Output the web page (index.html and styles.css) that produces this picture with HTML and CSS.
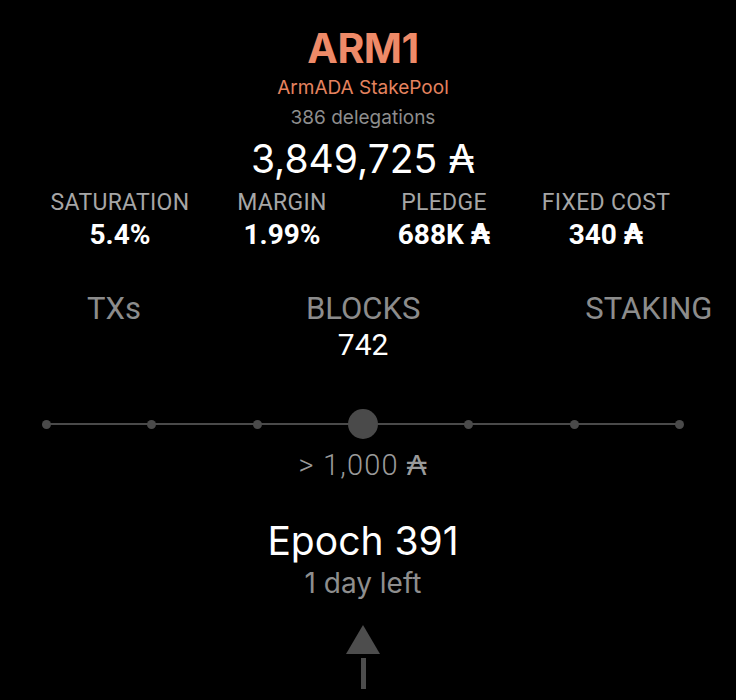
FILE: index.html
```html
<!DOCTYPE html>
<html lang="en">
<head>
    <meta charset="UTF-8">
    <title>ARM1 Pool</title>
    <link rel="stylesheet" href="styles.css">
</head>
<body>
    <div class="screen">
        <header class="pool">
            <h1 class="ticker">ARM1</h1>
            <div class="pool-name">ArmADA StakePool</div>
            <div class="delegations">386 delegations</div>
            <div class="stake">3,849,725 ₳</div>
        </header>

        <section class="stats">
            <div class="stat">
                <div class="stat-label">SATURATION</div>
                <div class="stat-value">5.4%</div>
            </div>
            <div class="stat">
                <div class="stat-label">MARGIN</div>
                <div class="stat-value">1.99%</div>
            </div>
            <div class="stat">
                <div class="stat-label">PLEDGE</div>
                <div class="stat-value">688K ₳</div>
            </div>
            <div class="stat">
                <div class="stat-label">FIXED COST</div>
                <div class="stat-value">340 ₳</div>
            </div>
        </section>

        <nav class="tabs">
            <div class="tab">TXs</div>
            <div class="tab active">
                BLOCKS
                <div class="tab-count">742</div>
            </div>
            <div class="tab">STAKING</div>
        </nav>

        <div class="slider">
            <span class="tick"><span class="dot"></span></span>
            <span class="tick"><span class="dot"></span></span>
            <span class="tick"><span class="dot"></span></span>
            <span class="tick"><span class="dot big"></span></span>
            <span class="tick"><span class="dot"></span></span>
            <span class="tick"><span class="dot"></span></span>
            <span class="tick"><span class="dot"></span></span>
        </div>
        <div class="slider-value">&gt; 1,000 ₳</div>

        <div class="epoch">
            <div class="epoch-title">Epoch 391</div>
            <div class="epoch-left">1 day left</div>
        </div>

        <svg class="arrow" width="34" height="64" viewBox="0 0 34 64">
            <polygon points="17,0 34,29 0,29" fill="#4d4d4d"/>
            <rect x="15" y="33" width="5" height="31" fill="#4d4d4d"/>
        </svg>
    </div>
</body>
</html>
```

FILE: styles.css
```css
body {
    margin: 0;
    background-color: #000;
    color: #fff;
    font-family: Inter, "DejaVu Sans", sans-serif;
}

.screen {
    width: 726px;
    display: flex;
    flex-direction: column;
    align-items: center;
    text-align: center;
}

.pool {
    padding-top: 23px;
}

.ticker {
    margin: 0;
    font-size: 41px;
    line-height: 50px;
    font-weight: 700;
    letter-spacing: -0.5px;
    color: #ee8a68;
}

.pool-name {
    font-size: 19px;
    line-height: 30px;
    color: #e5835f;
}

.delegations {
    font-size: 19px;
    line-height: 30px;
    color: #8e8e8e;
}

.stake {
    margin-top: 3px;
    font-size: 39px;
    line-height: 46px;
}

.stats {
    margin-top: 8px;
    width: 648px;
    display: grid;
    grid-template-columns: repeat(4, 1fr);
    font-family: Roboto, "DejaVu Sans", sans-serif;
}

.stat-label {
    font-size: 23px;
    line-height: 26px;
    letter-spacing: 0.3px;
    color: #a6a6a6;
}

.stat-value {
    margin-top: 3px;
    font-size: 28px;
    line-height: 32px;
    font-weight: 700;
}

.tabs {
    align-self: flex-start;
    margin-left: 87px;
    margin-top: 40px;
    display: flex;
    gap: 165px;
    font-family: Roboto, "DejaVu Sans", sans-serif;
    font-size: 31px;
    line-height: 36px;
    color: #8c8c8c;
}

.tab-count {
    color: #fff;
    font-size: 30px;
}

.slider {
    margin-top: 46px;
    align-self: flex-start;
    margin-left: 31px;
    width: 664px;
    height: 30px;
    display: flex;
    justify-content: space-between;
    background: linear-gradient(#4a4a4a, #4a4a4a) center / calc(100% - 30px) 2px no-repeat;
}

.tick {
    width: 30px;
    display: flex;
    align-items: center;
    justify-content: center;
}

.dot {
    width: 9px;
    height: 9px;
    border-radius: 50%;
    background-color: #4a4a4a;
}

.dot.big {
    width: 30px;
    height: 30px;
}

.slider-value {
    margin-top: 9px;
    font-family: Roboto, "DejaVu Sans", sans-serif;
    font-weight: 300;
    font-size: 29px;
    line-height: 34px;
    letter-spacing: 1.2px;
    color: #9a9a9a;
}

.epoch {
    margin-top: 36px;
}

.epoch-title {
    font-size: 39px;
    line-height: 46px;
}

.epoch-left {
    margin-top: 2px;
    font-size: 28px;
    line-height: 34px;
    color: #8e8e8e;
}

.arrow {
    margin-top: 25px;
}
```
